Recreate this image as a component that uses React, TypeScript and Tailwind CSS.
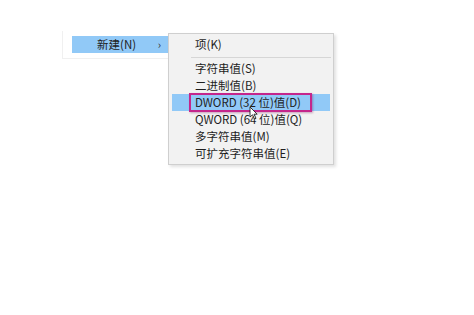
const font = { fontFamily: '"Noto Sans CJK SC", "Noto Sans", sans-serif' };

const items = [
  '字符串值(S)',
  '二进制值(B)',
  'DWORD (32 位)值(D)',
  'QWORD (64 位)值(Q)',
  '多字符串值(M)',
  '可扩充字符串值(E)',
];

function Cursor() {
  return (
    <svg
      className="absolute left-[77px] top-[12px]"
      width="9"
      height="14"
      viewBox="0 0 9 14"
    >
      <path
        d="M1 1 L1 11 L3.5 8.8 L5.5 13 L7 12.3 L5 8.2 L8.2 8.2 Z"
        fill="#fff"
        stroke="#222"
        strokeWidth="0.9"
        strokeLinejoin="round"
      />
    </svg>
  );
}

export default function App() {
  return (
    <div
      className="h-[315px] w-[474px] overflow-hidden bg-white text-[11.5px] text-[#1e1e1e]"
      style={font}
    >
      <div className="flex items-start pl-[62px] pt-[31px]">
        <div className="flex h-[28px] w-[106px] items-start border-b border-l border-[#f0f0f0] bg-white pl-[9px] pt-[5px]">
          <div className="flex h-[17px] w-[97px] items-center bg-[#91c9f7] pl-[25px] pr-[7px]">
            <span className="flex-1">新建(N)</span>
            <span className="text-[11px] text-[#333]">›</span>
          </div>
        </div>

        <div className="mt-[2px] flex w-[166px] flex-col border border-[#cfcfcf] bg-[#f2f2f2] pb-[2px] pt-[1px] shadow-[2px_2px_3px_rgba(0,0,0,0.12)]">
          <div className="flex h-[20px] items-center pl-[26px]">项(K)</div>
          <div className="my-[2px] ml-[22px] mr-[2px] h-px bg-[#d6d6d6]" />
          {items.map((label, i) => {
            const active = i === 2;
            return (
              <div
                key={label}
                className={
                  active
                    ? 'relative mx-[3px] flex h-[17px] items-center bg-[#91c9f7] pl-[17px]'
                    : 'flex h-[17px] items-center pl-[26px]'
                }
              >
                {active ? (
                  <span className="flex h-[19px] items-center border-2 border-[#c4268c] pl-[4px] pr-[9px] shadow-[1px_1px_2px_rgba(120,0,80,0.35)]">
                    {label}
                  </span>
                ) : (
                  label
                )}
                {active && <Cursor />}
              </div>
            );
          })}
        </div>
      </div>
    </div>
  );
}
